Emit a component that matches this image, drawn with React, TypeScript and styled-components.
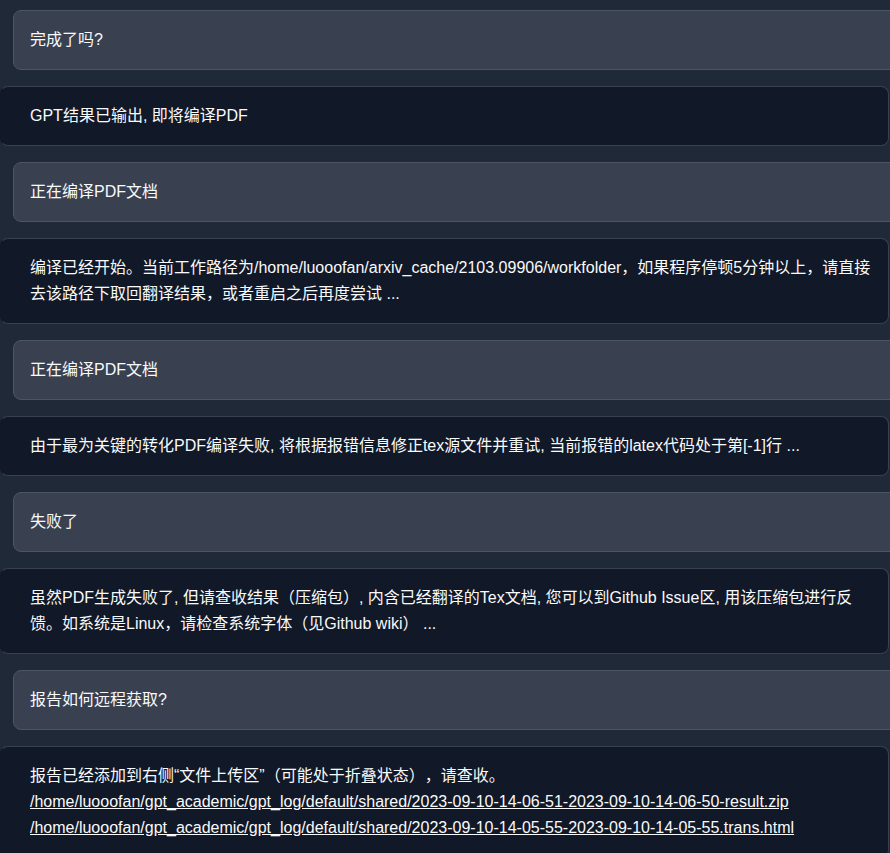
import * as React from 'react';
import styled, { createGlobalStyle } from 'styled-components';

type Message = {
	role: 'user' | 'bot';
	lines: string[];
	links?: string[];
};

var messages: Message[] = [
	{ role: 'user', lines: ['完成了吗?'] },
	{ role: 'bot', lines: ['GPT结果已输出, 即将编译PDF'] },
	{ role: 'user', lines: ['正在编译PDF文档'] },
	{
		role: 'bot',
		lines: [
			'编译已经开始。当前工作路径为/home/luooofan/arxiv_cache/2103.09906/workfolder，如果程序停顿5分钟以上，请直接去该路径下取回翻译结果，或者重启之后再度尝试 ...',
		],
	},
	{ role: 'user', lines: ['正在编译PDF文档'] },
	{
		role: 'bot',
		lines: ['由于最为关键的转化PDF编译失败, 将根据报错信息修正tex源文件并重试, 当前报错的latex代码处于第[-1]行 ...'],
	},
	{ role: 'user', lines: ['失败了'] },
	{
		role: 'bot',
		lines: [
			'虽然PDF生成失败了, 但请查收结果（压缩包）, 内含已经翻译的Tex文档, 您可以到Github Issue区, 用该压缩包进行反馈。如系统是Linux，请检查系统字体（见Github wiki） ...',
		],
	},
	{ role: 'user', lines: ['报告如何远程获取?'] },
	{
		role: 'bot',
		lines: ['报告已经添加到右侧“文件上传区”（可能处于折叠状态），请查收。'],
		links: [
			'/home/luooofan/gpt_academic/gpt_log/default/shared/2023-09-10-14-06-51-2023-09-10-14-06-50-result.zip',
			'/home/luooofan/gpt_academic/gpt_log/default/shared/2023-09-10-14-05-55-2023-09-10-14-05-55.trans.html',
		],
	},
];

function App() {
	return (
		<>
			<GlobalStyle />
			<ChatLog>
				{messages.map((msg, i) => (
					<Bubble key={i} $role={msg.role}>
						{msg.lines.map((line, j) => (
							<Line key={j}>{line}</Line>
						))}
						{msg.links?.map((href) => (
							<Line key={href}>
								<FileLink href='#'>{href}</FileLink>
							</Line>
						))}
					</Bubble>
				))}
			</ChatLog>
		</>
	);
}

export default App;

var GlobalStyle = createGlobalStyle`
	html, body {
		margin: 0;
		padding: 0;
		background: #1f2937;
		overflow: hidden;
	}
	body {
		font-family: "Liberation Sans", Arial, "Noto Sans CJK SC", sans-serif;
		font-size: 16px;
		color: #f9fafb;
		text-spacing-trim: space-all;
	}
`;

var ChatLog = styled.div`
	display: flex;
	flex-direction: column;
	gap: 16px;
	padding-top: 10px;
	width: 890px;
	height: 853px;
	overflow: hidden;
`;

var Bubble = styled.div<{ $role: 'user' | 'bot' }>`
	box-sizing: border-box;
	border-radius: 8px;
	line-height: 26px;
	padding: ${(p) => (p.$role === 'user' ? '16px 16px' : '16px 17px 16px 29px')};
	border: 1px solid ${(p) => (p.$role === 'user' ? '#4b5563' : '#374151')};
	border-left-color: ${(p) => (p.$role === 'user' ? '#4b5563' : '#111827')};
	background: ${(p) => (p.$role === 'user' ? '#394151' : '#111827')};
	margin-left: ${(p) => (p.$role === 'user' ? '13px' : '0')};
	margin-right: ${(p) => (p.$role === 'user' ? '-20px' : '1px')};
	flex-shrink: 0;
`;

var Line = styled.div`
	white-space: normal;
	word-break: break-word;
`;

var FileLink = styled.a`
	color: #f9fafb;
	text-decoration: underline;
`;
